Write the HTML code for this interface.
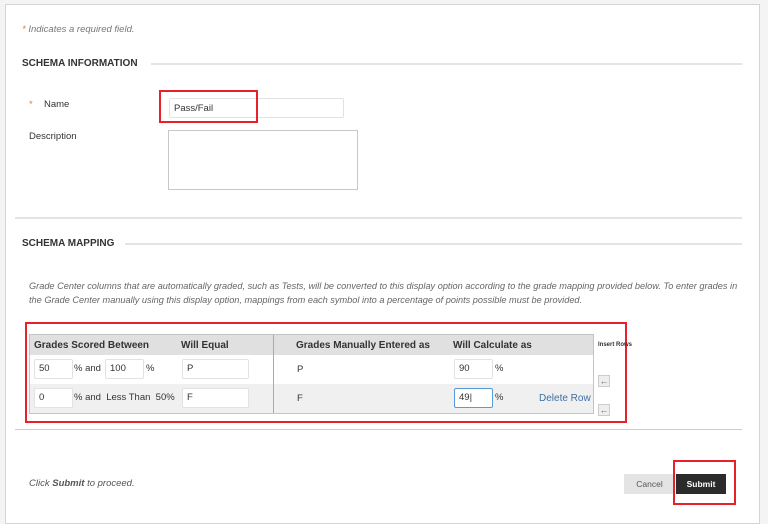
<!DOCTYPE html>
<html><head><style>
*{margin:0;padding:0;box-sizing:border-box}
body{width:768px;height:512px;background:#f4f4f4;position:relative;overflow:hidden;font-family:"Liberation Sans",sans-serif;font-size:9.5px;color:#333}
.a{position:absolute}
.panel{left:5px;top:4px;width:755px;height:520px;background:#fff;border:1px solid #d4d4d4}
.h{font-weight:bold;font-size:10px;color:#333}
.line{height:2px;background:#e4e4e4}
.inp{background:#fff;border:1px solid #e2e2e2;border-radius:2px;padding-left:4px;line-height:18px;font-size:9.5px;color:#333}
.red{border:2px solid #e8202a}
</style></head><body>
<div class="a panel"></div>
<div class="a" style="left:22px;top:24px;font-style:italic;color:#777"><span style="color:#e87c2b">*</span> Indicates a required field.</div>
<div class="a h" style="left:22px;top:58px">SCHEMA INFORMATION</div>
<div class="a line" style="left:151px;top:63px;width:591px"></div>
<div class="a" style="left:29px;top:99px;color:#e87c2b">*</div>
<div class="a" style="left:44px;top:99px">Name</div>
<div class="a inp" style="left:169px;top:98px;width:175px;height:20px;line-height:20px">Pass/Fail</div>
<div class="a red" style="left:159px;top:90px;width:99px;height:33px"></div>
<div class="a" style="left:29px;top:131px">Description</div>
<div class="a" style="left:168px;top:130px;width:190px;height:60px;border:1px solid #c8c8c8"></div>
<div class="a line" style="left:15px;top:217px;width:727px"></div>
<div class="a h" style="left:22px;top:238px">SCHEMA MAPPING</div>
<div class="a line" style="left:125px;top:243px;width:617px"></div>
<div class="a" style="left:29px;top:279px;width:712px;line-height:14px;font-style:italic;color:#666;font-size:9.2px">Grade Center columns that are automatically graded, such as Tests, will be converted to this display option according to the grade mapping provided below. To enter grades in the Grade Center manually using this display option, mappings from each symbol into a percentage of points possible must be provided.</div>
<div class="a" style="left:29px;top:334px;width:565px;height:80px;border:1px solid #c4c4c4;background:#fff"></div>
<div class="a" style="left:30px;top:335px;width:563px;height:20px;background:#e0e0e0"></div>
<div class="a" style="left:30px;top:384px;width:563px;height:29px;background:#f0f0f0"></div>
<div class="a" style="left:273px;top:335px;width:1px;height:78px;background:#aaa"></div>
<div class="a h" style="left:34px;top:340px">Grades Scored Between</div>
<div class="a h" style="left:181px;top:340px">Will Equal</div>
<div class="a h" style="left:296px;top:340px">Grades Manually Entered as</div>
<div class="a h" style="left:453px;top:340px">Will Calculate as</div>
<div class="a inp" style="left:34px;top:359px;width:39px;height:20px">50</div>
<div class="a" style="left:74px;top:363px">% and</div>
<div class="a inp" style="left:105px;top:359px;width:39px;height:20px">100</div>
<div class="a" style="left:146px;top:363px">%</div>
<div class="a inp" style="left:182px;top:359px;width:67px;height:20px">P</div>
<div class="a" style="left:297px;top:364px">P</div>
<div class="a inp" style="left:454px;top:359px;width:39px;height:20px">90</div>
<div class="a" style="left:495px;top:363px">%</div>
<div class="a inp" style="left:34px;top:388px;width:39px;height:20px">0</div>
<div class="a" style="left:74px;top:392px">% and &nbsp;Less Than &nbsp;50%</div>
<div class="a inp" style="left:182px;top:388px;width:67px;height:20px">F</div>
<div class="a" style="left:297px;top:393px">F</div>
<div class="a inp" style="left:454px;top:388px;width:39px;height:20px;border-color:#5b9bd5">49|</div>
<div class="a" style="left:495px;top:392px">%</div>
<div class="a" style="left:539px;top:393px;color:#3b6ea5;font-size:10px">Delete Row</div>
<div class="a red" style="left:25px;top:322px;width:602px;height:101px"></div>
<div class="a h" style="left:598px;top:342px;font-size:6px">Insert Rows</div>
<div class="a" style="left:598px;top:375px;width:12px;height:12px;background:#eee;border:1px solid #ccc;font-size:9px;line-height:10px;text-align:center;color:#666">←</div>
<div class="a" style="left:598px;top:404px;width:12px;height:12px;background:#eee;border:1px solid #ccc;font-size:9px;line-height:10px;text-align:center;color:#666">←</div>
<div class="a line" style="left:15px;top:429px;width:727px;height:1px;background:#ccc"></div>
<div class="a" style="left:29px;top:478px;font-style:italic;color:#555">Click <b>Submit</b> to proceed.</div>
<div class="a" style="left:624px;top:474px;width:51px;height:20px;background:#e4e4e4;color:#555;text-align:center;line-height:20px;font-size:8.5px">Cancel</div>
<div class="a" style="left:676px;top:474px;width:50px;height:20px;background:#2b2b2b;color:#fff;text-align:center;line-height:20px;font-size:8.5px;font-weight:bold">Submit</div>
<div class="a red" style="left:673px;top:460px;width:63px;height:45px"></div>
</body></html>
